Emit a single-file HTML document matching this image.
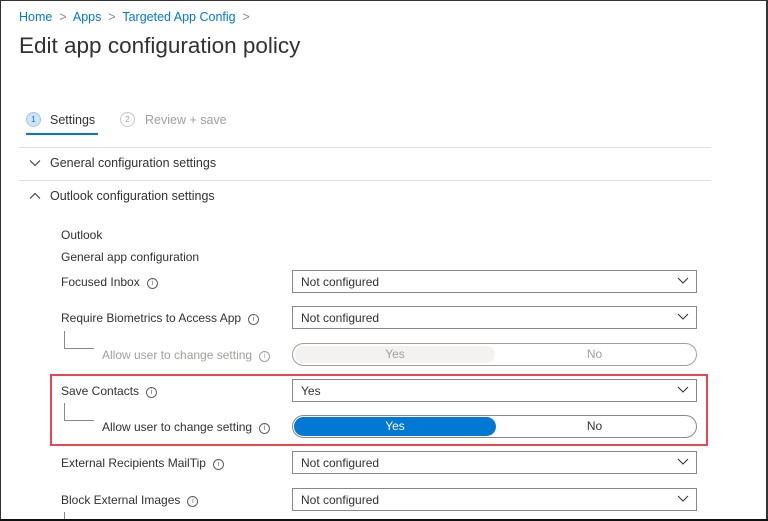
<html><head><style>
body{margin:0;width:768px;height:521px;background:#fff;font-family:"Liberation Sans",sans-serif;position:relative;overflow:hidden;color:#323130}
.a{position:absolute;white-space:nowrap}
.bc{color:#0078d4;font-size:12.5px;top:10px}
.lbl{font-size:12px;color:#323130}
.dd{position:absolute;left:292px;border:1px solid #8a8886;font-size:12px;box-sizing:border-box;width:405px;height:23px}
.dd span{position:absolute;left:8px;top:4px}
.dd svg{position:absolute;right:7px;top:6px}
.tg{position:absolute;left:292px;width:405px;height:23px;border:1px solid #8a8886;border-radius:12px;box-sizing:border-box;font-size:12px}
.tg .y{position:absolute;left:2px;top:2px;width:200px;height:17px;border-radius:9px;text-align:center;line-height:17px}
.tg .n{position:absolute;left:202px;right:2px;top:2px;text-align:center;line-height:17px}
.i{display:inline-block;width:9px;height:9px;border:1px solid #605e5c;border-radius:50%;font-size:7px;line-height:9px;text-align:center;margin-left:7px;vertical-align:1px;color:#605e5c}
.ln{position:absolute;background:#8a8886}
</style></head><body>
<div class="a" style="left:0;top:0;width:768px;height:1px;background:#333"></div>
<div class="a" style="left:0;top:0;width:1px;height:521px;background:#333"></div>
<div class="a" style="left:766px;top:0;width:2px;height:521px;background:#333"></div>
<div class="a" style="left:0;top:519px;width:768px;height:2px;background:#111"></div>
<div class="a bc" style="left:19px">Home <span style="color:#8a8886">&nbsp;&gt;&nbsp;</span> Apps <span style="color:#8a8886">&nbsp;&gt;&nbsp;</span> Targeted App Config <span style="color:#8a8886">&nbsp;&gt;</span></div>
<div class="a" style="left:19px;top:33px;font-size:22.5px;color:#323130">Edit app configuration policy</div>
<div class="a" style="left:26px;top:112px;width:13px;height:13px;border-radius:50%;background:#cfe4f7;border:1px solid #9cc7ee;font-size:8px;text-align:center;line-height:13px;color:#0078d4">1</div>
<div class="a" style="left:50px;top:113px;font-size:12.5px;color:#323130">Settings</div>
<div class="a" style="left:26px;top:133px;width:72px;height:2px;background:#0078d4"></div>
<div class="a" style="left:120px;top:112px;width:13px;height:13px;border-radius:50%;border:1px solid #c8c6c4;font-size:8px;text-align:center;line-height:13px;color:#a19f9d">2</div>
<div class="a" style="left:145px;top:113px;font-size:12.5px;color:#a19f9d">Review + save</div>
<div class="a" style="left:18px;top:147px;width:693px;height:1px;background:#e1dfdd"></div>
<div class="a" style="left:18px;top:180px;width:693px;height:1px;background:#e1dfdd"></div>
<svg class="a" style="left:29px;top:159px" width="12" height="8"><path d="M1 1.5L6 6.5L11 1.5" stroke="#323130" fill="none"/></svg>
<div class="a lbl" style="left:50px;top:156px;font-size:12.5px">General configuration settings</div>
<svg class="a" style="left:29px;top:192px" width="12" height="8"><path d="M1 6.5L6 1.5L11 6.5" stroke="#323130" fill="none"/></svg>
<div class="a lbl" style="left:50px;top:189px;font-size:12.5px">Outlook configuration settings</div>
<div class="a lbl" style="left:61px;top:228px">Outlook</div>
<div class="a lbl" style="left:61px;top:250px">General app configuration</div>

<div class="a lbl" style="left:61px;top:275px">Focused Inbox<span class="i">i</span></div>
<div class="dd" style="top:270px"><span>Not configured</span><svg width="12" height="8"><path d="M1 1L6 6L11 1" stroke="#323130" fill="none"/></svg></div>
<div class="a lbl" style="left:61px;top:311px">Require Biometrics to Access App<span class="i">i</span></div>
<div class="dd" style="top:306px"><span>Not configured</span><svg width="12" height="8"><path d="M1 1L6 6L11 1" stroke="#323130" fill="none"/></svg></div>
<div class="ln" style="left:64px;top:331px;width:1px;height:17px"></div>
<div class="ln" style="left:64px;top:348px;width:30px;height:1px"></div>
<div class="a lbl" style="left:102px;top:348px;color:#a19f9d">Allow user to change setting<span class="i" style="border-color:#a19f9d;color:#a19f9d">i</span></div>
<div class="tg" style="top:343px;border-color:#a19f9d"><div class="y" style="background:#f3f2f1;color:#a19f9d">Yes</div><div class="n" style="color:#a19f9d">No</div></div>

<div class="a" style="left:50px;top:374px;width:654px;height:68px;border:2px solid #e8474f"></div>
<div class="a lbl" style="left:61px;top:384px">Save Contacts<span class="i">i</span></div>
<div class="dd" style="top:379px"><span>Yes</span><svg width="12" height="8"><path d="M1 1L6 6L11 1" stroke="#323130" fill="none"/></svg></div>
<div class="ln" style="left:64px;top:403px;width:1px;height:17px"></div>
<div class="ln" style="left:64px;top:420px;width:30px;height:1px"></div>
<div class="a lbl" style="left:102px;top:420px">Allow user to change setting<span class="i">i</span></div>
<div class="tg" style="top:415px"><div class="y" style="background:#0078d4;color:#fff;left:1px;top:1px;height:19px;line-height:19px;width:202px;border-radius:10px">Yes</div><div class="n">No</div></div>

<div class="a lbl" style="left:61px;top:456px">External Recipients MailTip<span class="i">i</span></div>
<div class="dd" style="top:451px"><span>Not configured</span><svg width="12" height="8"><path d="M1 1L6 6L11 1" stroke="#323130" fill="none"/></svg></div>
<div class="a lbl" style="left:61px;top:493px">Block External Images<span class="i">i</span></div>
<div class="dd" style="top:488px"><span>Not configured</span><svg width="12" height="8"><path d="M1 1L6 6L11 1" stroke="#323130" fill="none"/></svg></div>
<div class="ln" style="left:64px;top:512px;width:1px;height:7px"></div>
</body></html>
